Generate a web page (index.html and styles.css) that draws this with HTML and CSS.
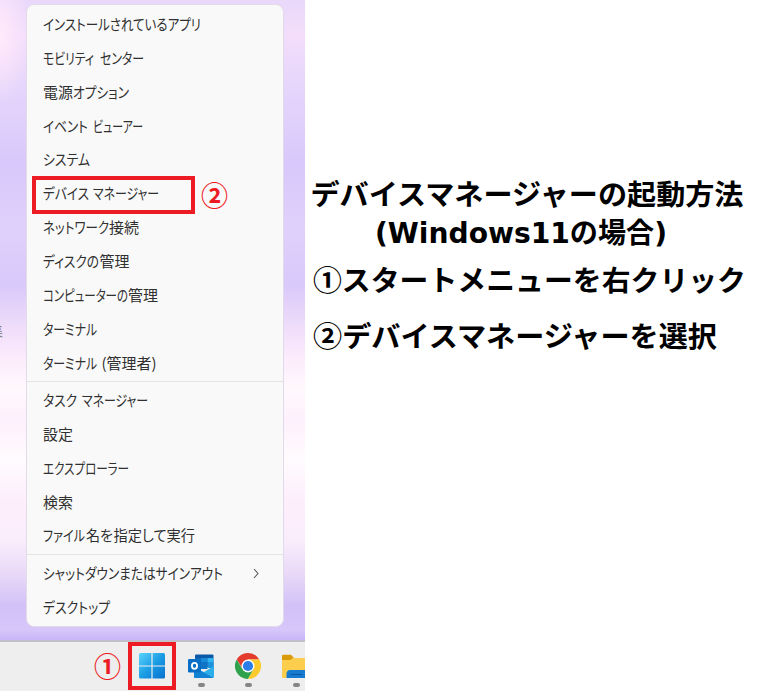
FILE: index.html
```html
<!DOCTYPE html>
<html lang="ja">
<head>
<meta charset="utf-8">
<title>デバイスマネージャーの起動方法</title>
<link rel="stylesheet" href="styles.css">
</head>
<body>
<main class="page">
  <section class="screen">
    <div class="desktop">
      <span class="icon-label">集</span>
      <nav class="menu">
        <div class="group">
          <svg class="item"><text x="43" y="23" textLength="158" lengthAdjust="spacingAndGlyphs">インストールされているアプリ</text></svg>
          <svg class="item"><text x="43" y="23" textLength="51" lengthAdjust="spacingAndGlyphs">モビリティ</text><text x="100" y="23" textLength="44" lengthAdjust="spacingAndGlyphs">センター</text></svg>
          <svg class="item"><text x="43" y="23" textLength="30" lengthAdjust="spacingAndGlyphs">電源</text><text x="73" y="23" textLength="56" lengthAdjust="spacingAndGlyphs">オプション</text></svg>
          <svg class="item"><text x="43" y="23" textLength="45" lengthAdjust="spacingAndGlyphs">イベント</text><text x="93" y="23" textLength="50" lengthAdjust="spacingAndGlyphs">ビューアー</text></svg>
          <svg class="item"><text x="43" y="23" textLength="47" lengthAdjust="spacingAndGlyphs">システム</text></svg>
          <svg class="item"><text x="43" y="23" textLength="46" lengthAdjust="spacingAndGlyphs">デバイス</text><text x="93" y="23" textLength="66" lengthAdjust="spacingAndGlyphs">マネージャー</text></svg>
          <svg class="item"><text x="43" y="23" textLength="66" lengthAdjust="spacingAndGlyphs">ネットワーク</text><text x="109" y="23" textLength="30" lengthAdjust="spacingAndGlyphs">接続</text></svg>
          <svg class="item"><text x="43" y="23" textLength="56" lengthAdjust="spacingAndGlyphs">ディスクの</text><text x="99.500" y="23" textLength="30" lengthAdjust="spacingAndGlyphs">管理</text></svg>
          <svg class="item"><text x="43" y="23" textLength="85" lengthAdjust="spacingAndGlyphs">コンピューターの</text><text x="128" y="23" textLength="30" lengthAdjust="spacingAndGlyphs">管理</text></svg>
          <svg class="item"><text x="43" y="23" textLength="54" lengthAdjust="spacingAndGlyphs">ターミナル</text></svg>
          <svg class="item"><text x="43" y="23" textLength="54" lengthAdjust="spacingAndGlyphs">ターミナル</text><text x="101.500" y="23" textLength="55" lengthAdjust="spacingAndGlyphs">(管理者)</text></svg>
        </div>
        <div class="group">
          <svg class="item"><text x="43" y="23" textLength="34" lengthAdjust="spacingAndGlyphs">タスク</text><text x="82" y="23" textLength="66" lengthAdjust="spacingAndGlyphs">マネージャー</text></svg>
          <svg class="item"><text x="43" y="23" textLength="30" lengthAdjust="spacingAndGlyphs">設定</text></svg>
          <svg class="item"><text x="43" y="23" textLength="86" lengthAdjust="spacingAndGlyphs">エクスプローラー</text></svg>
          <svg class="item"><text x="43" y="23" textLength="30" lengthAdjust="spacingAndGlyphs">検索</text></svg>
          <svg class="item"><text x="43" y="23" textLength="42" lengthAdjust="spacingAndGlyphs">ファイル</text><text x="86" y="23" textLength="27" lengthAdjust="spacingAndGlyphs">名を</text><text x="113.500" y="23" textLength="81.500" lengthAdjust="spacingAndGlyphs">指定して実行</text></svg>
        </div>
        <div class="group">
          <svg class="item"><text x="43" y="23" textLength="180" lengthAdjust="spacingAndGlyphs">シャットダウンまたはサインアウト</text><path class="chevron" d="M254 13l4 4.500-4 4.500"/></svg>
          <svg class="item"><text x="43" y="23" textLength="67" lengthAdjust="spacingAndGlyphs">デスクトップ</text></svg>
        </div>
      </nav>
      <div class="highlight"></div>
      <span class="mark mark-two">②</span>
    </div>
    <footer class="taskbar">
      <span class="mark">①</span>
      <div class="start">
        <svg width="26" height="26" viewBox="0 0 26 26">
          <defs><linearGradient id="win" x1="0" y1="0" x2="26" y2="26" gradientUnits="userSpaceOnUse"><stop offset="0" stop-color="#5bd3fb"/><stop offset=".5" stop-color="#1b9de4"/><stop offset="1" stop-color="#0670cf"/></linearGradient></defs>
          <path fill="url(#win)" d="M1.500 0H12.400V12.400H0V1.500Q0 0 1.500 0ZM13.600 0H24.500Q26 0 26 1.500V12.400H13.600ZM0 13.600H12.400V25.500H1.500Q0 25.500 0 24ZM13.600 13.600H26V24Q26 25.500 24.500 25.500H13.600Z"/>
        </svg>
      </div>
      <div class="app outlook">
        <svg width="27" height="26" viewBox="0 0 27 26">
          <path fill="#0a5aa8" d="M7 2.500Q7 1.500 8 1.500H24.500Q25.500 1.500 25.500 2.500V14H7Z"/>
          <path fill="#1069b8" d="M7 5H13V9H7Z"/><path fill="#178bd9" d="M13 5H19.500V9H13Z"/><path fill="#32b4f0" d="M19.500 5H25.500V9H19.500Z"/>
          <path fill="#0b5cab" d="M7 9H13V15H7Z"/><path fill="#0f73c6" d="M13 9H19.500V16H13Z"/><path fill="#1c93df" d="M19.500 9H25.500V15H19.500Z"/>
          <path fill="#2caee9" d="M26 13V23.500Q26 25 24.500 25H7.500Q6 25 6 23.500V15L16 19Z"/>
          <path fill="#1482d3" d="M6 14L25.500 25H7.500Q6 25 6 23.500Z"/>
          <rect y="6" width="13" height="13.500" rx="1.200" fill="#096fc5"/>
          <ellipse cx="6.500" cy="12.800" rx="2.600" ry="3" fill="none" stroke="#fff" stroke-width="1.800"/>
        </svg>
        <i class="running"></i>
      </div>
      <div class="app chrome">
        <svg width="26" height="26" viewBox="0 0 26 26">
          <path fill="#e33b2e" d="M1.740 6.500L7.800 16L13 13V6.500H24.260A13 13 0 0 0 1.740 6.500Z"/>
          <path fill="#2da14c" d="M1.740 6.500A13 13 0 0 0 13 26L18.600 16.200L13 13L7.400 16.200Z"/>
          <path fill="#fdcb2e" d="M24.260 6.500A13 13 0 0 1 13 26L18.600 16.200L13 6.500Z"/>
          <circle cx="13" cy="13" r="6.500" fill="#fff"/><circle cx="13" cy="13" r="5.100" fill="#2b7de9"/>
        </svg>
        <i class="running"></i>
      </div>
      <div class="app folder">
        <svg width="28" height="26" viewBox="0 0 28 26">
          <path fill="#d99b0b" d="M0 3Q0 1.800 1.200 1.800H9L12 5V9H0Z"/>
          <path fill="#fdcd4d" d="M0 7H8.500L11 5H28V25H1.200Q0 25 0 23.800Z"/>
          <path fill="#147bd0" d="M4.500 25V21Q4.500 17 8.500 17H28V25Z"/>
          <path stroke="#0b569c" d="M9 21.500H20"/>
        </svg>
        <i class="running"></i>
      </div>
    </footer>
  </section>
  <section class="guide">
    <svg class="line title"><text x="5.500" y="28" textLength="433" lengthAdjust="spacingAndGlyphs">デバイスマネージャーの起動方法</text></svg>
    <svg class="line sub"><text x="70" y="28" textLength="292" lengthAdjust="spacingAndGlyphs">(Windows11の場合)</text></svg>
    <svg class="line step"><text x="8" y="28" textLength="433" lengthAdjust="spacingAndGlyphs">①スタートメニューを右クリック</text></svg>
    <svg class="line step"><text x="8" y="28" textLength="404" lengthAdjust="spacingAndGlyphs">②デバイスマネージャーを選択</text></svg>
  </section>
</main>
</body>
</html>
```
FILE: styles.css
```css
body { margin: 0; background: #fff; overflow: hidden; }
.page { display: flex; width: 768px; height: 700px; overflow: hidden; font-family: "Noto Sans CJK JP", sans-serif; }
.screen { width: 305px; height: 691px; overflow: hidden; flex: none; }
.desktop {
  position: relative; height: 640px; box-sizing: border-box; padding: 5px 0 0 26px;
  background:
    radial-gradient(ellipse 30px 70px at 0 35px, #ffe9fb, transparent),
    linear-gradient(#e9d8fa 0, #f3ddfb 35px, #e5d5fb 90px, #d8c8fb 165px, #dfd0fb 230px, #d9c8fa 285px, #eedcfa 325px, #fbeafc 355px, #fff9fd 390px, #fdf0fc 420px, #fffbfe 460px, #fdeefc 500px, #faedfb 540px, #e8d8f7 575px, #d2c1f7 605px, #d6c6f9 630px, #c7b6f7 640px);
}
.icon-label { position: absolute; left: -11px; top: 321px; font-size: 14px; line-height: 18px; color: #777; }
.menu {
  width: 256px; height: 619px; padding-top: 2px; box-sizing: content-box;
  border: 1px solid #e4dbea; border-radius: 8px; margin-top: -1px;
  background: #f9f9f9; overflow: hidden;
}
.group + .group { border-top: 1px solid #e3e3e3; margin-top: 1.800px; padding-top: .800px; }
.item { display: block; width: 256px; height: 33.860px; }
.item text { transform: translateX(-27px); fill: #303030; font-size: 15px; font-feature-settings: "palt"; }
.item text, .line text { white-space: pre; }
.chevron { fill: none; stroke: #555; stroke-width: 1.100; transform: translateX(-27px); }
.highlight { position: absolute; left: 32px; top: 176px; width: 155px; height: 30px; border: 4px solid #ed1c24; }
.mark { color: #ed1c24; font-size: 27px; line-height: 30px; font-weight: 700; }
.mark-two { position: absolute; left: 201px; top: 180px; }
.taskbar { display: flex; align-items: flex-start; box-sizing: border-box; height: 51px; border-top: 2px solid #c2bfca; background: #eee; }
.taskbar .mark { margin: 9px 7px 0 94px; width: 27px; }
.start { display: flex; justify-content: center; align-items: center; width: 40px; height: 40px; border: 4px solid #ed1c24; flex: none; }
.app { display: flex; flex-direction: column; align-items: center; flex: none; margin-top: 11px; }
.app svg { display: block; }
.outlook { margin-left: 12px; }
.chrome { margin-left: 20px; }
.folder { margin-left: 21px; }
.running { width: 7px; height: 4px; margin-top: 4px; border-radius: 2px; background: #858585; }
.guide { width: 463px; padding-top: 177px; }
.line { display: block; width: 463px; height: 38px; overflow: visible; }
.line text { font-family: "Noto Sans CJK JP", sans-serif; font-weight: 700; font-size: 28.800px; }
.sub text { font-family: "DejaVu Sans", "Noto Sans CJK JP", sans-serif; }
.sub { height: 48px; }
.step { height: 56px; }
```
